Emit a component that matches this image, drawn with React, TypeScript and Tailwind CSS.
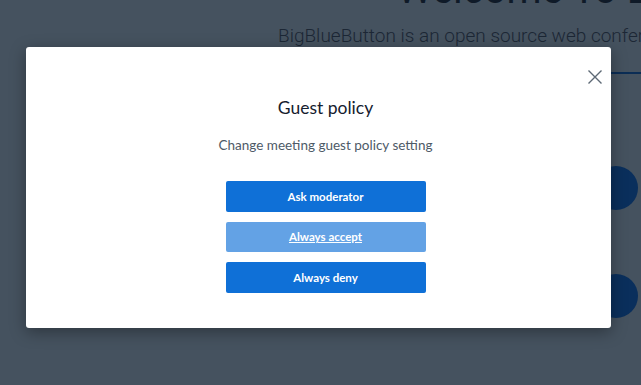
import React from "react";

export default function App() {
  const font = { fontFamily: "Lato, 'Noto Sans', sans-serif" };
  return (
    <div className="relative w-[641px] h-[385px] overflow-hidden bg-[#45525f] flex" style={font}>
      <div className="w-[9px] h-full bg-[#4a5563]" />
      <div className="w-[28px] h-full bg-[#06162a]" />
      <div className="flex-1 relative flex flex-col">
        <div className="mt-[-30px] pl-[397px] whitespace-nowrap text-[40px] leading-[40px] text-[#0f1a28]" style={{ fontFamily: "Roboto, sans-serif" }}>
          Welcome To BigBlueButton
        </div>
        <div className="mt-[13px] pl-[278px] whitespace-nowrap text-[19px] leading-[26px] font-light text-[#1c2735]" style={{ fontFamily: "Roboto, sans-serif" }}>
          BigBlueButton is an open source web conferencing system
        </div>
        <div className="mt-[23px] ml-[589px] h-[2px] bg-[#0b2d55]" />
        <div className="absolute left-[594px] top-[166px] w-[44px] h-[44px] rounded-full bg-[#0a2f5c]" />
        <div className="absolute left-[594px] top-[274px] w-[44px] h-[44px] rounded-full bg-[#0a2f5c]" />
      </div>

      <div className="absolute left-[26px] top-[47px] w-[585px] h-[281px] bg-white rounded-[3px] shadow-[0_4px_16px_rgba(0,0,0,0.35)] flex flex-col items-center pl-[14px]">
        <button className="absolute right-[6px] top-[20px] w-[20px] h-[20px] flex items-center justify-center text-[#5d6975]">
          <svg width="16" height="16" viewBox="0 0 16 16" fill="none" stroke="currentColor" strokeWidth="1.4">
            <path d="M1.5 1.5 L14.5 14.5 M14.5 1.5 L1.5 14.5" />
          </svg>
        </button>
        <h2 className="mt-[48px] text-[17.5px] leading-[26px] text-[#15202e]">Guest policy</h2>
        <p className="mt-[14px] text-[13.5px] leading-[20px] text-[#4e5a67]">Change meeting guest policy setting</p>
        <div className="mt-[26px] flex flex-col gap-[10px]">
          <div className="w-[200px] h-[31px] rounded-[2px] bg-[#0f70d7] text-white text-[11.5px] font-bold flex items-center justify-center">Ask moderator</div>
          <div className="w-[200px] h-[30px] rounded-[2px] bg-[#63a2e5] text-white text-[11.5px] font-bold flex items-center justify-center underline">Always accept</div>
          <div className="w-[200px] h-[31px] rounded-[2px] bg-[#0f70d7] text-white text-[11.5px] font-bold flex items-center justify-center">Always deny</div>
        </div>
      </div>
    </div>
  );
}
